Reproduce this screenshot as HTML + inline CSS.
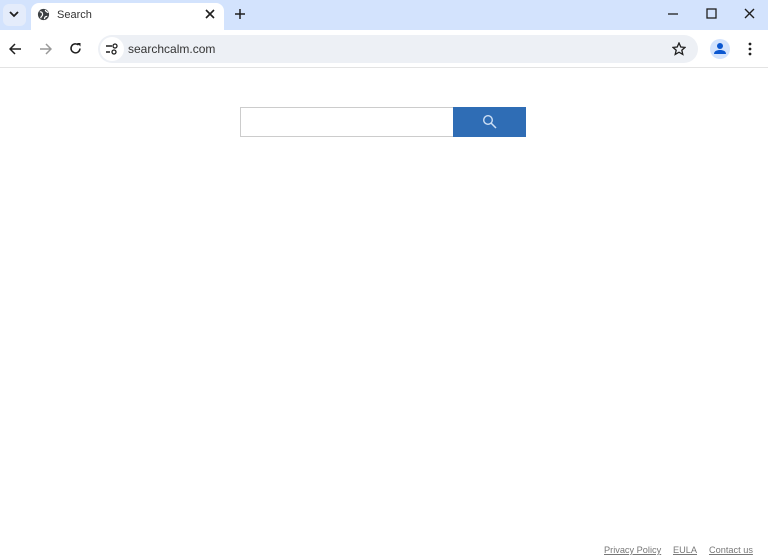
<!DOCTYPE html>
<html><head><style>
*{margin:0;padding:0;box-sizing:border-box}
body{width:768px;height:557px;overflow:hidden;background:#fff;font-family:"Liberation Sans",sans-serif;position:relative}
.tabbar{position:absolute;left:0;top:0;width:768px;height:30px;background:#d3e3fd}
.tab{position:absolute;left:31px;top:3px;width:193px;height:27px;background:#fff;border-radius:8px 8px 0 0}
.toolbar{position:absolute;left:0;top:30px;width:768px;height:38px;background:#fff;border-bottom:1px solid #e3e3e3}
.omni{position:absolute;left:98px;top:5px;width:600px;height:28px;background:#edf0f5;border-radius:14px}
svg{position:absolute}
.t{position:absolute;font-size:12px;color:#333}
.sb{position:absolute;left:240px;top:107px;width:214px;height:30px;border:1px solid #ccc;background:#fff}
.btn{position:absolute;left:453px;top:107px;width:73px;height:30px;background:#2f6db5}
.f{position:absolute;top:545px;font-size:9.2px;color:#777;text-decoration:underline}
</style></head><body>
<div class="tabbar"></div>
<div style="position:absolute;left:3px;top:4px;width:23px;height:22px;background:#e4ecfb;border-radius:6px"></div>
<svg style="left:9px;top:10px" width="10" height="8"><path d="M1 2l4 4 4-4" stroke="#1f1f1f" stroke-width="1.8" fill="none"/></svg>
<div class="tab"></div>
<svg style="left:37px;top:8px" width="13" height="13" viewBox="0 0 14 14"><circle cx="7" cy="7" r="6" fill="#3c4043"/><path d="M3 4c2 0 3 1 3 3s-2 2-2 4M9 2c0 2 2 2 3 3M8 12c0-2 1-3 3-3" stroke="#fff" stroke-width="1.3" fill="none"/></svg>
<div class="t" style="left:57px;top:9px;font-size:11px">Search</div>
<svg style="left:205px;top:9px" width="10" height="10"><path d="M1 1l8 8M9 1l-8 8" stroke="#1f1f1f" stroke-width="1.6"/></svg>
<svg style="left:234px;top:8px" width="12" height="12"><path d="M6 1v10M1 6h10" stroke="#1f1f1f" stroke-width="1.5"/></svg>
<svg style="left:668px;top:13px" width="10" height="2"><path d="M0 1h10" stroke="#1f1f1f" stroke-width="1.3"/></svg>
<svg style="left:706px;top:8px" width="11" height="11"><rect x="1" y="1" width="9" height="9" stroke="#1f1f1f" stroke-width="1.3" fill="none"/></svg>
<svg style="left:744px;top:8px" width="11" height="11"><path d="M1 1l9 9M10 1l-9 9" stroke="#1f1f1f" stroke-width="1.4"/></svg>
<div class="toolbar"><div class="omni"></div></div>
<svg style="left:9px;top:43px" width="13" height="12"><path d="M12 6H2M6 1L1 6l5 5" stroke="#1f1f1f" stroke-width="1.5" fill="none"/></svg>
<svg style="left:39px;top:43px" width="13" height="12"><path d="M1 6h10M7 1l5 5-5 5" stroke="#999" stroke-width="1.5" fill="none"/></svg>
<svg style="left:69px;top:42px" width="13" height="13" viewBox="0 0 13 13"><path d="M11 6.5A4.5 4.5 0 1 1 9.5 3" stroke="#1f1f1f" stroke-width="1.5" fill="none"/><path d="M8 1h3.5v3.5z" fill="#1f1f1f"/></svg>
<div style="position:absolute;left:100px;top:37px;width:24px;height:24px;border-radius:12px;background:#fff"></div>
<svg style="left:105px;top:43px" width="13" height="12"><path d="M1 3h6M1 9h4" stroke="#1f1f1f" stroke-width="1.5"/><circle cx="10" cy="3" r="2" stroke="#1f1f1f" stroke-width="1.3" fill="none"/><circle cx="9" cy="9" r="2" stroke="#1f1f1f" stroke-width="1.3" fill="none"/></svg>
<div class="t" style="left:128px;top:42px">searchcalm.com</div>
<svg style="left:672px;top:42px" width="14" height="14" viewBox="0 0 14 14"><path d="M7 1l1.8 4 4.2.4-3.2 2.8 1 4.2L7 10.2 3.2 12.4l1-4.2L1 5.4l4.2-.4z" stroke="#1f1f1f" stroke-width="1.3" fill="none"/></svg>
<div style="position:absolute;left:710px;top:39px;width:20px;height:20px;border-radius:10px;background:#d3e3fd"></div>
<svg style="left:714px;top:42px" width="12" height="13"><circle cx="6" cy="4" r="3" fill="#0b57d0"/><path d="M0 12c0-3 3-4 6-4s6 1 6 4z" fill="#0b57d0"/></svg>
<svg style="left:748px;top:42px" width="4" height="14"><circle cx="2" cy="2" r="1.4" fill="#1f1f1f"/><circle cx="2" cy="7" r="1.4" fill="#1f1f1f"/><circle cx="2" cy="12" r="1.4" fill="#1f1f1f"/></svg>
<div class="sb"></div>
<div class="btn"></div>
<svg style="left:482px;top:114px" width="15" height="15"><circle cx="6" cy="6" r="4.3" stroke="#cfe0f5" stroke-width="1.4" fill="none"/><path d="M9 9l5 5" stroke="#cfe0f5" stroke-width="1.5"/></svg>
<div class="f" style="left:604px">Privacy Policy</div>
<div class="f" style="left:673px">EULA</div>
<div class="f" style="left:709px">Contact us</div>
</body></html>
